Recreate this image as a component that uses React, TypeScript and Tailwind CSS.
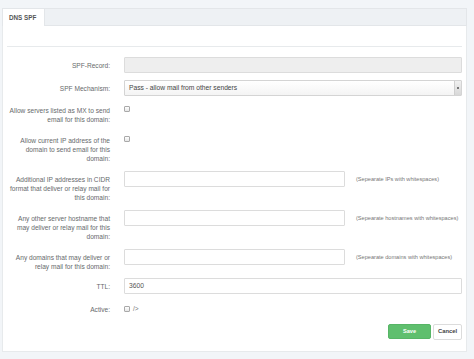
import React from "react";

const font = { fontFamily: '"Liberation Sans", Arial, sans-serif' };

function Label({ lines }: { lines: string[] }) {
  return (
    <div className="w-[103px] shrink-0 pt-[3.5px] text-right text-[6.6px] leading-[9px] whitespace-nowrap text-[#676a6c]">
      {lines.map((l, i) => (
        <div key={i}>{l}</div>
      ))}
    </div>
  );
}

function Checkbox() {
  return (
    <span className="inline-block h-[6px] w-[6px] rounded-[1px] border border-[#a9a9a9] bg-gradient-to-b from-white to-[#e6e6e6]" />
  );
}

function TextInput({ value, disabled, wide }: { value?: string; disabled?: boolean; wide?: boolean }) {
  return (
    <div
      className={`flex h-[16px] items-center rounded-[1px] border border-[#dcdcdc] px-[4px] text-[6.7px] text-[#555] ${
        wide ? "w-[338px]" : "w-[221px]"
      } ${disabled ? "bg-[#eeeeee]" : "bg-white"}`}
    >
      {value}
    </div>
  );
}

function Help({ children }: { children: React.ReactNode }) {
  return <span className="flex h-[16px] items-center text-[5.6px] text-[#777]">{children}</span>;
}

export default function App() {
  return (
    <div className="h-[359px] w-[474px] overflow-hidden bg-[#f2f5f8] pt-[8px] pl-[2px]" style={font}>
      <div className="w-[465px]">
        {/* tab header */}
        <div className="flex h-[18px]">
          <div className="flex w-[43px] items-center border-l border-t border-r border-[#e3e6e9] bg-white pl-[6px] text-[6.3px] font-bold text-[#555]">
            DNS SPF
          </div>
          <div className="flex-1 border-t border-b border-r border-[#e3e6e9] bg-[#eef1f4]" />
        </div>

        {/* body */}
        <div className="border-x border-b border-[#e7eaec] bg-white px-[4px] pt-[20px] pb-[11px]">
          <div className="h-px w-[455px] bg-[#e7eaec]" />

          {/* SPF-Record */}
          <div className="mt-[10px] flex">
            <Label lines={["SPF-Record:"]} />
            <div className="ml-[14px]">
              <TextInput disabled wide />
            </div>
          </div>

          {/* SPF Mechanism */}
          <div className="mt-[7px] flex">
            <Label lines={["SPF Mechanism:"]} />
            <div className="ml-[14px] flex h-[16px] w-[338px] items-center rounded-[1px] border border-[#d4d4d4] bg-gradient-to-b from-white to-[#f4f4f4] text-[6.7px] text-[#444]">
              <span className="flex-1 pl-[4px]">Pass - allow mail from other senders</span>
              <span className="flex h-full w-[7px] items-center justify-center border-l border-[#cfcfcf] bg-gradient-to-b from-[#f0f0f0] to-[#d8d8d8]">
                <span className="h-[2px] w-[2px] bg-[#777]" />
              </span>
            </div>
          </div>

          {/* Allow MX */}
          <div className="mt-[6px] flex">
            <Label lines={["Allow servers listed as MX to send", "email for this domain:"]} />
            <div className="ml-[14px] flex h-[12px] items-center pt-[2px]">
              <Checkbox />
            </div>
          </div>

          {/* Allow current IP */}
          <div className="mt-[8.5px] flex">
            <Label lines={["Allow current IP address of the", "domain to send email for this", "domain:"]} />
            <div className="ml-[14px] flex h-[12px] items-center pt-[2px]">
              <Checkbox />
            </div>
          </div>

          {/* Additional IP */}
          <div className="mt-[8.5px] flex">
            <Label lines={["Additional IP addresses in CIDR", "format that deliver or relay mail for", "this domain:"]} />
            <div className="ml-[14px] flex items-start gap-[11px]">
              <TextInput />
              <Help>(Sepearate IPs with whitespaces)</Help>
            </div>
          </div>

          {/* Any other hostname */}
          <div className="mt-[8.5px] flex">
            <Label lines={["Any other server hostname that", "may deliver or relay mail for this", "domain:"]} />
            <div className="ml-[14px] flex items-start gap-[11px]">
              <TextInput />
              <Help>(Sepearate hostnames with whitespaces)</Help>
            </div>
          </div>

          {/* Any domains */}
          <div className="mt-[8.5px] flex">
            <Label lines={["Any domains that may deliver or", "relay mail for this domain:"]} />
            <div className="ml-[14px] flex items-start gap-[11px]">
              <TextInput />
              <Help>(Sepearate domains with whitespaces)</Help>
            </div>
          </div>

          {/* TTL */}
          <div className="mt-[7.5px] flex">
            <Label lines={["TTL:"]} />
            <div className="ml-[14px]">
              <TextInput value="3600" wide />
            </div>
          </div>

          {/* Active */}
          <div className="mt-[7px] flex">
            <Label lines={["Active:"]} />
            <div className="ml-[14px] flex h-[12.5px] items-center gap-[3px] pt-[3px] text-[6.5px] text-[#777]">
              <Checkbox />
              <span>/&gt;</span>
            </div>
          </div>

          {/* buttons */}
          <div className="mt-[10px] flex w-[455px] items-center justify-end gap-[2px]">
            <button className="flex h-[15px] w-[43px] items-center justify-center rounded-[2px] border border-[#57b566] bg-[#5fbf6e] text-[5.6px] font-bold text-white">
              Save
            </button>
            <button className="flex h-[16px] w-[29px] items-center justify-center rounded-[2px] border border-[#dcdcdc] bg-white text-[5.8px] font-bold text-[#444]">
              Cancel
            </button>
          </div>
        </div>
      </div>
    </div>
  );
}
